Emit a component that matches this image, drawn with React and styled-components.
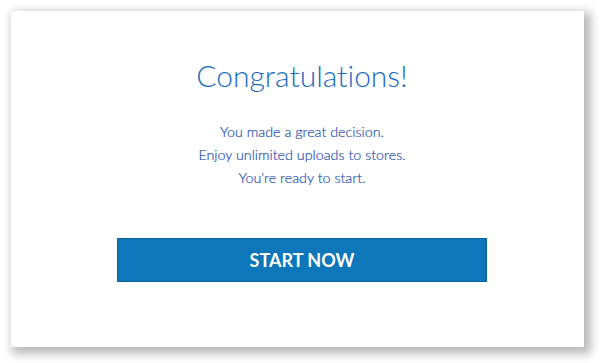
import React from "react";
import styled, { createGlobalStyle } from "styled-components";

const Global = createGlobalStyle`
  html, body { margin: 0; padding: 0; background: #ffffff; }
  body { font-family: Lato, "Open Sans", sans-serif; font-variant-ligatures: none; }
`;

const Page = styled.div`
  padding: 11px;
  width: 600px;
  height: 363px;
  box-sizing: border-box;
`;

const Card = styled.div`
  width: 573px;
  height: 336px;
  box-sizing: border-box;
  background: #ffffff;
  box-shadow: 4px 4px 9px 3px rgba(0, 0, 0, 0.27);
  padding: 46px 0 0 9px;
  display: flex;
  flex-direction: column;
  align-items: center;
`;

const Title = styled.h1`
  margin: 0;
  font-family: Lato, sans-serif;
  font-weight: 300;
  font-size: 30px;
  line-height: 36px;
  color: #1a6bc4;
  font-variant-ligatures: none;
`;

const Message = styled.p`
  margin: 27px 0 0;
  font-family: Lato, sans-serif;
  font-weight: 300;
  font-size: 14.3px;
  line-height: 23px;
  color: #2a52b3;
  text-align: center;
  -webkit-text-stroke: 0.2px #2a52b3;
  font-variant-ligatures: none;
`;

const Button = styled.button`
  margin-top: 49px;
  width: 370px;
  height: 44px;
  background: #0e77b9;
  border: 1px solid #0a65a1;
  color: #ffffff;
  font-family: Lato, sans-serif;
  font-weight: 700;
  font-size: 18px;
  cursor: pointer;
  padding: 0;
`;

export default function App() {
  return (
    <>
      <Global />
      <Page>
        <Card>
          <Title>Congratulations!</Title>
          <Message>
            You made a great decision.
            <br />
            Enjoy unlimited uploads to stores.
            <br />
            You're ready to start.
          </Message>
          <Button>START NOW</Button>
        </Card>
      </Page>
    </>
  );
}
